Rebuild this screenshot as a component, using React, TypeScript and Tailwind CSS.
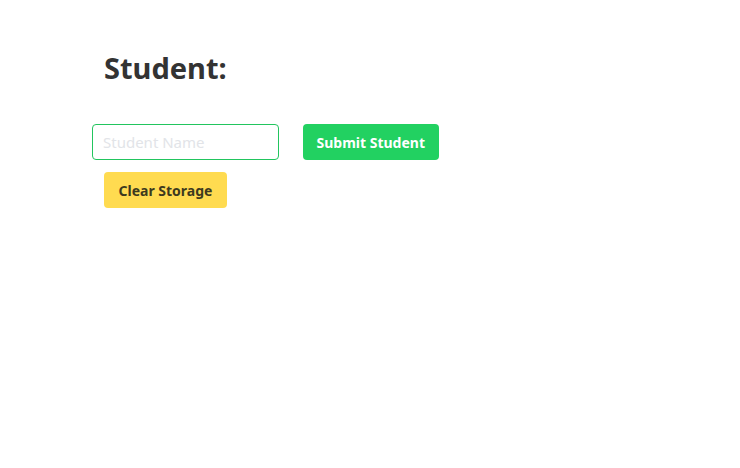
export default function App() {
  return (
    <div className="min-h-screen bg-white font-['Noto_Sans',sans-serif] pt-[48px] pl-[92px]">
      <h1 className="ml-[12px] text-[29px] leading-[40px] font-bold text-[#333333]">Student:</h1>
      <div className="mt-[36px] flex items-center gap-[24px]">
        <input
          type="text"
          placeholder="Student Name"
          className="w-[187px] h-[36px] rounded-[4px] border border-[#22c55e] px-[10px] text-[15px] text-[#333] placeholder:text-[#e2e4e8] outline-none"
        />
        <button className="h-[36px] px-[13.5px] rounded-[4px] bg-[#22d161] text-white text-[14px] font-bold">
          Submit Student
        </button>
      </div>
      <button className="mt-[12px] ml-[12px] h-[36px] px-[14.5px] rounded-[4px] bg-[#ffdb50] text-[#3d3a1e] text-[14px] font-bold">
        Clear Storage
      </button>
    </div>
  );
}
